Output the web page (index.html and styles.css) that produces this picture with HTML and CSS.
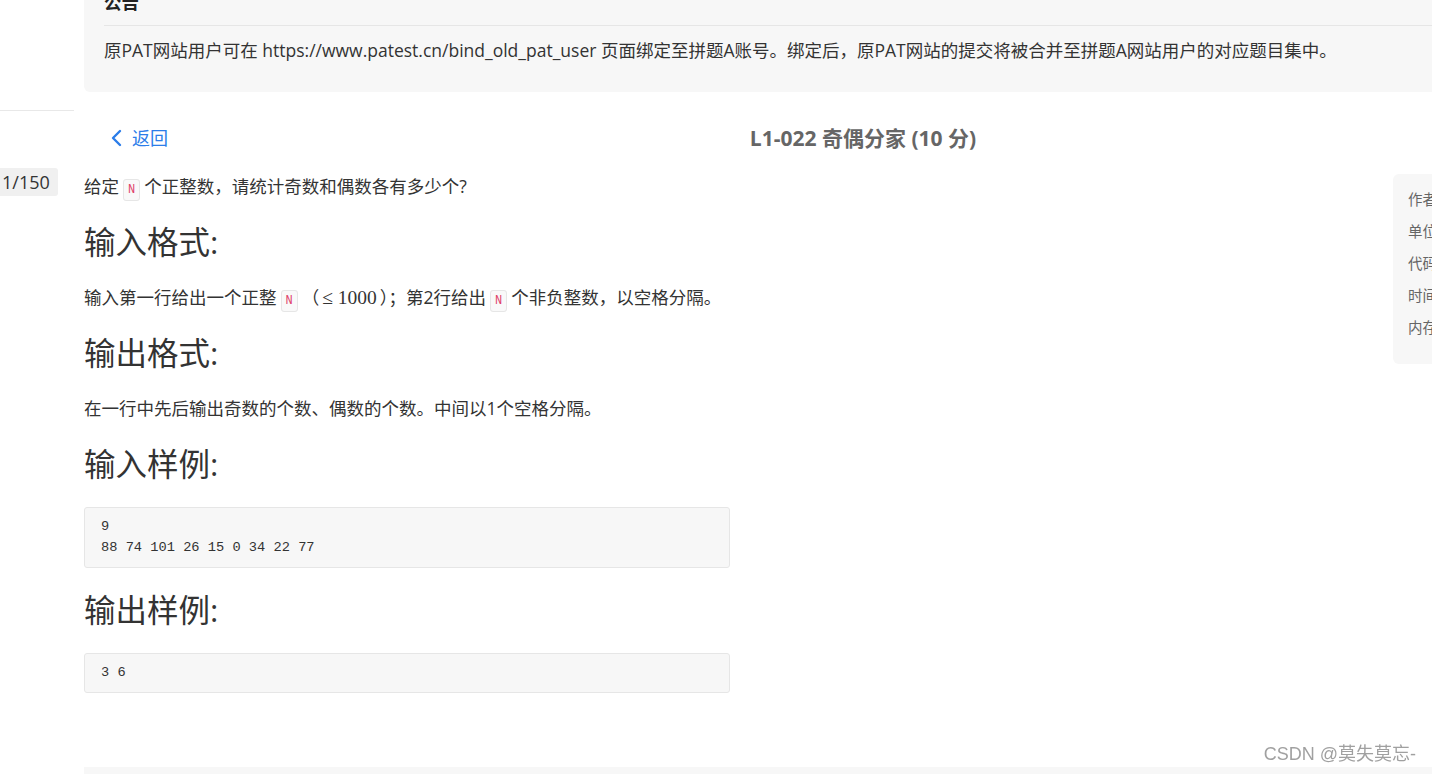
FILE: index.html
```html
<!DOCTYPE html>
<html lang="zh-CN">
<head>
  <meta charset="UTF-8">
  <title>L1-022 奇偶分家</title>
  <link rel="stylesheet" href="styles.css">
</head>
<body>

  <div class="page">
    <aside class="side">
      <div class="side-nav"></div>
      <div class="counter">1/150</div>
    </aside>

    <main class="main">
      <section class="notice">
        <h3 class="notice-title">公告</h3>
        <p class="notice-text">原PAT网站用户可在 https://www.patest.cn/bind_old_pat_user 页面绑定至拼题A账号。绑定后，原PAT网站的提交将被合并至拼题A网站用户的对应题目集中。</p>
      </section>

      <header class="problem-head">
        <a class="back" href="#">
          <svg width="12" height="18" viewBox="0 0 12 18"><path d="M10 2 L3 9 L10 16" fill="none" stroke="currentColor" stroke-width="2.4" stroke-linecap="round" stroke-linejoin="round"/></svg>
          返回
        </a>
        <h2 class="problem-title">L1-022 奇偶分家 (10 分)</h2>
      </header>

      <div class="problem-body">
        <article class="content">
          <p>给定<code>N</code>个正整数，请统计奇数和偶数各有多少个?</p>
          <h1>输入格式:</h1>
          <p>输入第一行给出一个正整<code>N</code>（<span class="math">≤ 1000</span>）；第2行给出<code>N</code>个非负整数，以空格分隔。</p>
          <h1>输出格式:</h1>
          <p>在一行中先后输出奇数的个数、偶数的个数。中间以1个空格分隔。</p>
          <h1>输入样例:</h1>
          <pre>9
88 74 101 26 15 0 34 22 77</pre>
          <h1>输出样例:</h1>
          <pre class="last">3 6</pre>
        </article>

        <div class="info">
          <div class="info-row"><span class="info-label">作者</span><span>陈越</span></div>
          <div class="info-row"><span class="info-label">单位</span><span>浙江大学</span></div>
          <div class="info-row"><span class="info-label">代码长度限制</span><span>16 KB</span></div>
          <div class="info-row"><span class="info-label">时间限制</span><span>400 ms</span></div>
          <div class="info-row"><span class="info-label">内存限制</span><span>64 MB</span></div>
        </div>
      </div>

      <div class="editor-bar"></div>
    </main>
  </div>

  <div class="watermark">CSDN @莫失莫忘-</div>

</body>
</html>
```

FILE: styles.css
```css
html, body {
  margin: 0;
  width: 1432px;
  height: 774px;
  overflow: hidden;
  background: #fff;
}

body {
  font-family: "Open Sans", "Noto Sans CJK SC", sans-serif;
  color: #333;
  font-size: 17.5px;
}

.page {
  display: flex;
  width: 1642px;
}

.side {
  flex: 0 0 84px;
}

.side-nav {
  width: 74px;
  height: 111px;
  box-sizing: border-box;
  border-bottom: 1px solid #e8e8e8;
}

.counter {
  margin-top: 57px;
  width: 58px;
  height: 28px;
  line-height: 28px;
  padding-left: 2px;
  box-sizing: border-box;
  background: #f0f0f0;
  border-radius: 0 3px 3px 0;
  font-size: 18px;
  color: #333;
}

.main {
  flex: 0 0 1558px;
}

.notice {
  margin-top: -22px;
  background: #f7f7f7;
  border-radius: 6px;
  padding: 0 20px 30px;
}

.notice-title {
  margin: 0;
  padding: 12px 0 11px;
  font-size: 17.5px;
  line-height: 24px;
  font-weight: bold;
  color: #222;
  border-bottom: 1px solid #e6e6e6;
}

.notice-text {
  margin: 12px 0 0;
  line-height: 24px;
  white-space: nowrap;
}

.problem-head {
  display: grid;
  grid-template-columns: 1fr auto 1fr;
  align-items: center;
  padding: 34px 0 24px;
}

.back {
  justify-self: start;
  display: flex;
  align-items: center;
  gap: 10px;
  padding-left: 26px;
  font-size: 18px;
  line-height: 24px;
  color: #2b7de9;
  text-decoration: none;
}

.back svg {
  display: block;
}

.problem-title {
  margin: 0;
  font-size: 21px;
  line-height: 24px;
  font-weight: bold;
  color: #666;
}

.problem-body {
  display: flex;
  align-items: flex-start;
}

.content {
  flex: 0 0 660px;
}

.content p {
  margin: 0 0 23px;
  line-height: 24px;
}

.content h1 {
  margin: 0 0 23px;
  font-size: 31.5px;
  line-height: 41px;
  font-weight: normal;
  color: #333;
}

code {
  font-family: "Liberation Mono", monospace;
  font-size: 12px;
  line-height: 1;
  color: #e0436b;
  background: #f9f9f9;
  border: 1px solid #e6e6e6;
  border-radius: 3px;
  padding: 3px 4px;
  margin: 0 4px;
}

.math {
  font-family: "Liberation Serif", serif;
  font-size: 19.5px;
  line-height: 1;
  margin: 0 3px;
}

pre {
  width: 646px;
  box-sizing: border-box;
  margin: 0 0 21px;
  padding: 8px 16px 9px;
  background: #f7f7f7;
  border: 1px solid #e6e6e6;
  border-radius: 3px;
  font-family: "Liberation Mono", monospace;
  font-size: 13.7px;
  line-height: 21px;
  color: #333;
}

pre.last {
  margin-bottom: 0;
}

.info {
  margin-left: auto;
  margin-right: 29px;
  width: 220px;
  background: #f7f7f7;
  border-radius: 6px;
  padding: 10px 15px 20px;
  box-sizing: border-box;
}

.info-row {
  display: flex;
  line-height: 32px;
  font-size: 14.5px;
  color: #666;
  white-space: nowrap;
}

.info-label {
  width: 100px;
}

.editor-bar {
  margin-top: 74px;
  height: 40px;
  background: #f7f7f7;
}

.watermark {
  position: fixed;
  right: 16px;
  bottom: 8px;
  font-family: "Liberation Sans", "Noto Sans CJK SC", sans-serif;
  font-size: 18px;
  line-height: 24px;
  color: rgba(120, 120, 120, 0.7);
}
```
